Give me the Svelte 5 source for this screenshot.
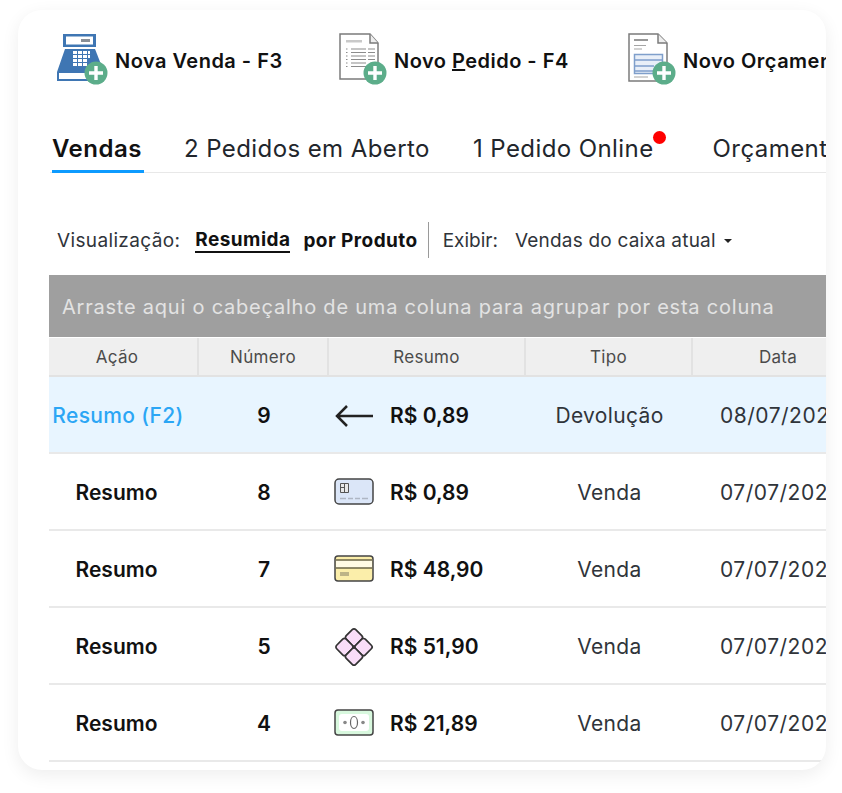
<script>
  const tabs = [
    { label: "Vendas", active: true },
    { label: "2 Pedidos em Aberto" },
    { label: "1 Pedido Online", dot: true },
    { label: "Orçamentos" },
  ];

  const columns = [
    { label: "Ação", width: 150 },
    { label: "Número", width: 130 },
    { label: "Resumo", width: 197 },
    { label: "Tipo", width: 167 },
    { label: "Data", width: 172 },
  ];

  const rows = [
    { action: "Resumo (F2)", num: 9, icon: "back", total: "R$ 0,89", type: "Devolução", date: "08/07/2023", selected: true },
    { action: "Resumo", num: 8, icon: "debit", total: "R$ 0,89", type: "Venda", date: "07/07/2023" },
    { action: "Resumo", num: 7, icon: "credit", total: "R$ 48,90", type: "Venda", date: "07/07/2023" },
    { action: "Resumo", num: 5, icon: "pix", total: "R$ 51,90", type: "Venda", date: "07/07/2023" },
    { action: "Resumo", num: 4, icon: "cash", total: "R$ 21,89", type: "Venda", date: "07/07/2023" },
  ];
</script>

{#snippet plus(cx)}
  <circle {cx} cy="40" r="11.5" fill="#5cad8a" />
  <path d="M{cx} 33v14M{cx - 7} 40h14" stroke="#fff" stroke-width="3.4" />
{/snippet}

<div class="page">
  <div class="card">
    <div class="toolbar">
      <button class="tool tool-venda">
        <svg width="52" height="52" viewBox="0 0 52 52">
          <path d="M6 1h33v13H6z" fill="#3f76b3" />
          <path d="M9 3.500h27v8H9z" fill="#fff" />
          <path d="M24 6h9v3h-9z" fill="#8a8f96" />
          <path d="M8 16h30l9 23v9H0v-9z" fill="#3f76b3" />
          <path d="M2 40h43v6H2z" fill="#fff" />
          <g fill="#fff">
            <path d="M16 18h4v3h-4zM21 18h4v3h-4zM26 18h4v3h-4zM31 18h2v3h-2z" />
            <path d="M16 22h4v3h-4zM21 22h4v3h-4zM26 22h4v3h-4zM31 22h2v3h-2z" />
            <path d="M16 26h4v3h-4zM21 26h4v3h-4zM26 26h4v3h-4z" />
            <path d="M16 30h4v3h-4zM21 30h4v3h-4zM26 30h4v3h-4z" />
          </g>
          {@render plus(39)}
        </svg>
        <span>Nova Venda - F3</span>
      </button>
      <button class="tool tool-pedido">
        <svg width="52" height="52" viewBox="0 0 52 52">
          <path d="M1 1h30l8 9v36H1z" fill="#fff" stroke="#7b7b7b" stroke-width="1.500" />
          <path d="M31 1v9h8" fill="#eee" stroke="#7b7b7b" stroke-width="1.500" />
          <path d="M7 7h16v2.500H7z" fill="#c9c9c9" />
          <g stroke="#8c8c8c" stroke-width="1.200">
            <path d="M12 16h15M12 19.500h15M12 23h15M12 26.500h15M12 30h15M12 33.500h15" />
            <path d="M29 16h7M29 19.500h7M29 23h7M29 26.500h7" />
            <path d="M7 16h1.500M7 19.500h1.500M7 23h1.500M7 26.500h1.500M7 30h1.500M7 33.500h1.500" />
          </g>
          {@render plus(36)}
        </svg>
        <span>Novo <u>P</u>edido - F4</span>
      </button>
      <button class="tool tool-orcamento">
        <svg width="52" height="52" viewBox="0 0 52 52">
          <path d="M1 1h29l9 9v38H1z" fill="#fff" stroke="#7b7b7b" stroke-width="1.500" />
          <path d="M30 1v9h9" fill="#eee" stroke="#7b7b7b" stroke-width="1.500" />
          <path d="M6 7h14" stroke="#777" stroke-width="1.500" />
          <path d="M6 12.500h12M6 16h8" stroke="#a5a5a5" stroke-width="1.200" />
          <path d="M6.500 21.500h28v19h-28z" fill="#e9eff8" stroke="#7f9fcb" stroke-width="1.500" />
          <path d="M6 27h28M6 33h20M6 38h20" stroke="#7f9fcb" stroke-width="1.500" />
          <path d="M6 44h14" stroke="#a5a5a5" stroke-width="1.200" />
          {@render plus(36)}
        </svg>
        <span>Novo Orçamento - F5</span>
      </button>
    </div>

    <div class="tabs">
      {#each tabs as tab}
        <div class="tab" class:active={tab.active} class:has-dot={tab.dot}>
          {tab.label}
          {#if tab.dot}<i class="dot"></i>{/if}
        </div>
      {/each}
    </div>

    <div class="filters">
      <span class="filter-label">Visualização:</span>
      <span class="view current">Resumida</span>
      <span class="view">por Produto</span>
      <span class="sep"></span>
      <span class="show-label">Exibir:</span>
      <span class="select">Vendas do caixa atual<i class="caret"></i></span>
    </div>

    <div class="group-bar">Arraste aqui o cabeçalho de uma coluna para agrupar por esta coluna</div>

    <div class="grid">
      <div class="head">
        {#each columns as col}
          <div class="th" style="width: {col.width}px">{col.label}</div>
        {/each}
      </div>
      {#each rows as row}
        <div class="row" class:selected={row.selected}>
          <div class="cell action" style="width: {columns[0].width}px">{row.action}</div>
          <div class="cell num" style="width: {columns[1].width}px">{row.num}</div>
          <div class="cell total" style="width: {columns[2].width}px">
            <svg width="40" height="40" viewBox="0 0 40 40">
              {#if row.icon === "back"}
                <path d="M39 20H3M13 10L3 20l10 10" fill="none" stroke="#222" stroke-width="2.500" />
              {:else if row.icon === "debit"}
                <g transform="translate(0 -1)">
                  <rect x="1" y="7" width="38" height="25" rx="4" fill="#dbe6f8" stroke="#444" stroke-width="1.500" />
                  <path d="M6.500 11.500h8v9h-8z" fill="#e8e8e8" stroke="#555" />
                  <path d="M10.500 11.500v9M6.500 15.500h4" stroke="#555" />
                  <path d="M6 26.500h6M14 26.500h5M21 26.500h5M28 26.500h6" stroke="#aeb6c4" stroke-width="1.500" />
                </g>
              {:else if row.icon === "credit"}
                <g transform="translate(0 -1)">
                  <rect x="1" y="7" width="38" height="25" rx="3" fill="#fbeeaa" stroke="#444" stroke-width="1.500" />
                  <path d="M2 11h36v8H2z" fill="#fffbe6" />
                  <path d="M2 11h36M2 19h36" stroke="#6b6548" stroke-width="1.400" />
                  <path d="M6 23h9v4H6z" fill="#bdb487" />
                </g>
              {:else if row.icon === "pix"}
                <g transform="rotate(45 20 20)" fill="#f9ddf8" stroke="#333" stroke-width="1.700">
                  <rect x="6.500" y="6.500" width="13.500" height="13.500" rx="2.500" />
                  <rect x="20" y="6.500" width="13.500" height="13.500" rx="2.500" />
                  <rect x="6.500" y="20" width="13.500" height="13.500" rx="2.500" />
                  <rect x="20" y="20" width="13.500" height="13.500" rx="2.500" />
                </g>
              {:else}
                <g transform="translate(0 -1)">
                  <rect x="1" y="7" width="38" height="25" rx="3" fill="#d8f8de" stroke="#444" stroke-width="1.500" />
                  <rect x="5" y="11" width="30" height="17" rx="3" fill="#fff" />
                  <ellipse cx="20" cy="19.500" rx="3.500" ry="6" fill="#fff" stroke="#666" stroke-width="1.200" />
                  <circle cx="11" cy="19.500" r="1.800" fill="#888" />
                  <circle cx="29" cy="19.500" r="1.800" fill="#888" />
                </g>
              {/if}
            </svg>
            <span>{row.total}</span>
          </div>
          <div class="cell type" style="width: {columns[3].width}px">{row.type}</div>
          <div class="cell date" style="width: {columns[4].width}px">{row.date}</div>
        </div>
      {/each}
    </div>
  </div>
</div>

<style>
  :global(body) {
    background: #fff;
    font-family: Inter, "Noto Sans", sans-serif;
    color: #1c1c1c;
  }

  .page {
    width: 842px;
    height: 793px;
    padding: 10px 0 0 18px;
    box-sizing: border-box;
    overflow: hidden;
  }

  .card {
    width: 808px;
    height: 760px;
    box-sizing: border-box;
    padding-left: 31px;
    background: #fff;
    border-radius: 24px;
    box-shadow: 0 5px 18px rgba(0, 0, 0, 0.07);
    overflow: hidden;
  }

  .toolbar {
    display: flex;
    height: 76px;
    padding-top: 23px;
    box-sizing: content-box;
    white-space: nowrap;
  }

  .tool {
    display: flex;
    align-items: center;
    gap: 6px;
    height: 52px;
    padding: 0;
    border: 0;
    background: none;
    font: 600 20px Inter, sans-serif;
    letter-spacing: 0.48px;
    color: #111;
    flex: none;
  }

  .tool span {
    position: relative;
    top: 2px;
  }

  .tool-venda {
    width: 282px;
    margin-left: 8px;
  }

  .tool-pedido {
    width: 289px;
    gap: 3px;
  }

  .tool-orcamento {
    gap: 3px;
  }

  .tabs {
    display: flex;
    align-items: flex-end;
    gap: 40px;
    height: 40px;
    margin-top: 23px;
    border-bottom: 1px solid #e8e8e8;
    margin-left: 1px;
    white-space: nowrap;
  }

  .tab {
    position: relative;
    flex: none;
    padding: 0 3px 7px 0;
    font-size: 24px;
    line-height: 29px;
    letter-spacing: 0.42px;
    color: #22262c;
    border-bottom: 3px solid transparent;
    margin-bottom: -1px;
  }

  .tab.active {
    margin-left: 2px;
    padding-right: 2px;
    font-weight: 600;
    letter-spacing: 0.5px;
    color: #111;
    border-bottom-color: #0d9bff;
  }

  .tab.has-dot {
    margin-right: 16px;
  }

  .dot {
    position: absolute;
    top: -3px;
    right: -9px;
    width: 13px;
    height: 13px;
    border-radius: 50%;
    background: #f00;
  }

  .filters {
    display: flex;
    align-items: center;
    height: 38px;
    margin-top: 48px;
    padding-left: 8px;
    font-size: 19px;
    color: #30343a;
    white-space: nowrap;
  }

  .filter-label {
    letter-spacing: 0.36px;
  }

  .view {
    font-weight: 700;
    letter-spacing: 0.45px;
    color: #111;
  }

  .view.current {
    margin-left: 15px;
    margin-right: 13px;
    border-bottom: 2px solid #111;
  }

  .sep {
    width: 1px;
    height: 36px;
    margin: 0 14px 0 10px;
    background: #9a9a9a;
  }

  .select {
    margin-left: 17px;
    letter-spacing: 0.2px;
  }

  .caret {
    display: inline-block;
    margin-left: 8px;
    vertical-align: middle;
    border: 4.500px solid transparent;
    border-top-color: #222;
    border-bottom-width: 0;
  }

  .group-bar {
    height: 62px;
    margin-top: 16px;
    padding-left: 13px;
    background: #9f9f9f;
    color: #e3e3e3;
    font-size: 20px;
    line-height: 64px;
    white-space: nowrap;
    letter-spacing: 0.78px;
  }

  .grid {
    width: 816px;
  }

  .head {
    display: flex;
    height: 37px;
    margin-top: 1px;
    background: #efefef;
    border-bottom: 2px solid #e2e2e2;
    box-sizing: content-box;
  }

  .th {
    flex: none;
    box-sizing: border-box;
    border-right: 2px solid #e2e2e2;
    font-size: 17px;
    line-height: 38px;
    letter-spacing: 0.3px;
    text-align: center;
    color: #4b4b4b;
  }

  .th:first-child {
    padding-right: 12px;
  }

  .row {
    display: flex;
    height: 75px;
    border-bottom: 2px solid #e9e9e9;
  }

  .row.selected {
    background: #e8f5ff;
  }

  .cell {
    display: flex;
    align-items: center;
    justify-content: center;
    flex: none;
    padding-top: 2px;
    box-sizing: border-box;
    font-size: 21px;
    white-space: nowrap;
  }

  .action,
  .num,
  .total {
    font-weight: 600;
    color: #111;
  }

  .selected .action {
    color: #2ba6f5;
    font-weight: 500;
    letter-spacing: 0.36px;
    padding-right: 12px;
  }

  .action {
    padding-right: 15px;
  }

  .total {
    justify-content: flex-start;
    gap: 16px;
    padding-left: 5px;
  }

  .type {
    color: #30343a;
    letter-spacing: 0.35px;
  }

  .date {
    justify-content: flex-start;
    padding-left: 27px;
    color: #30343a;
    letter-spacing: 0.5px;
  }
</style>
